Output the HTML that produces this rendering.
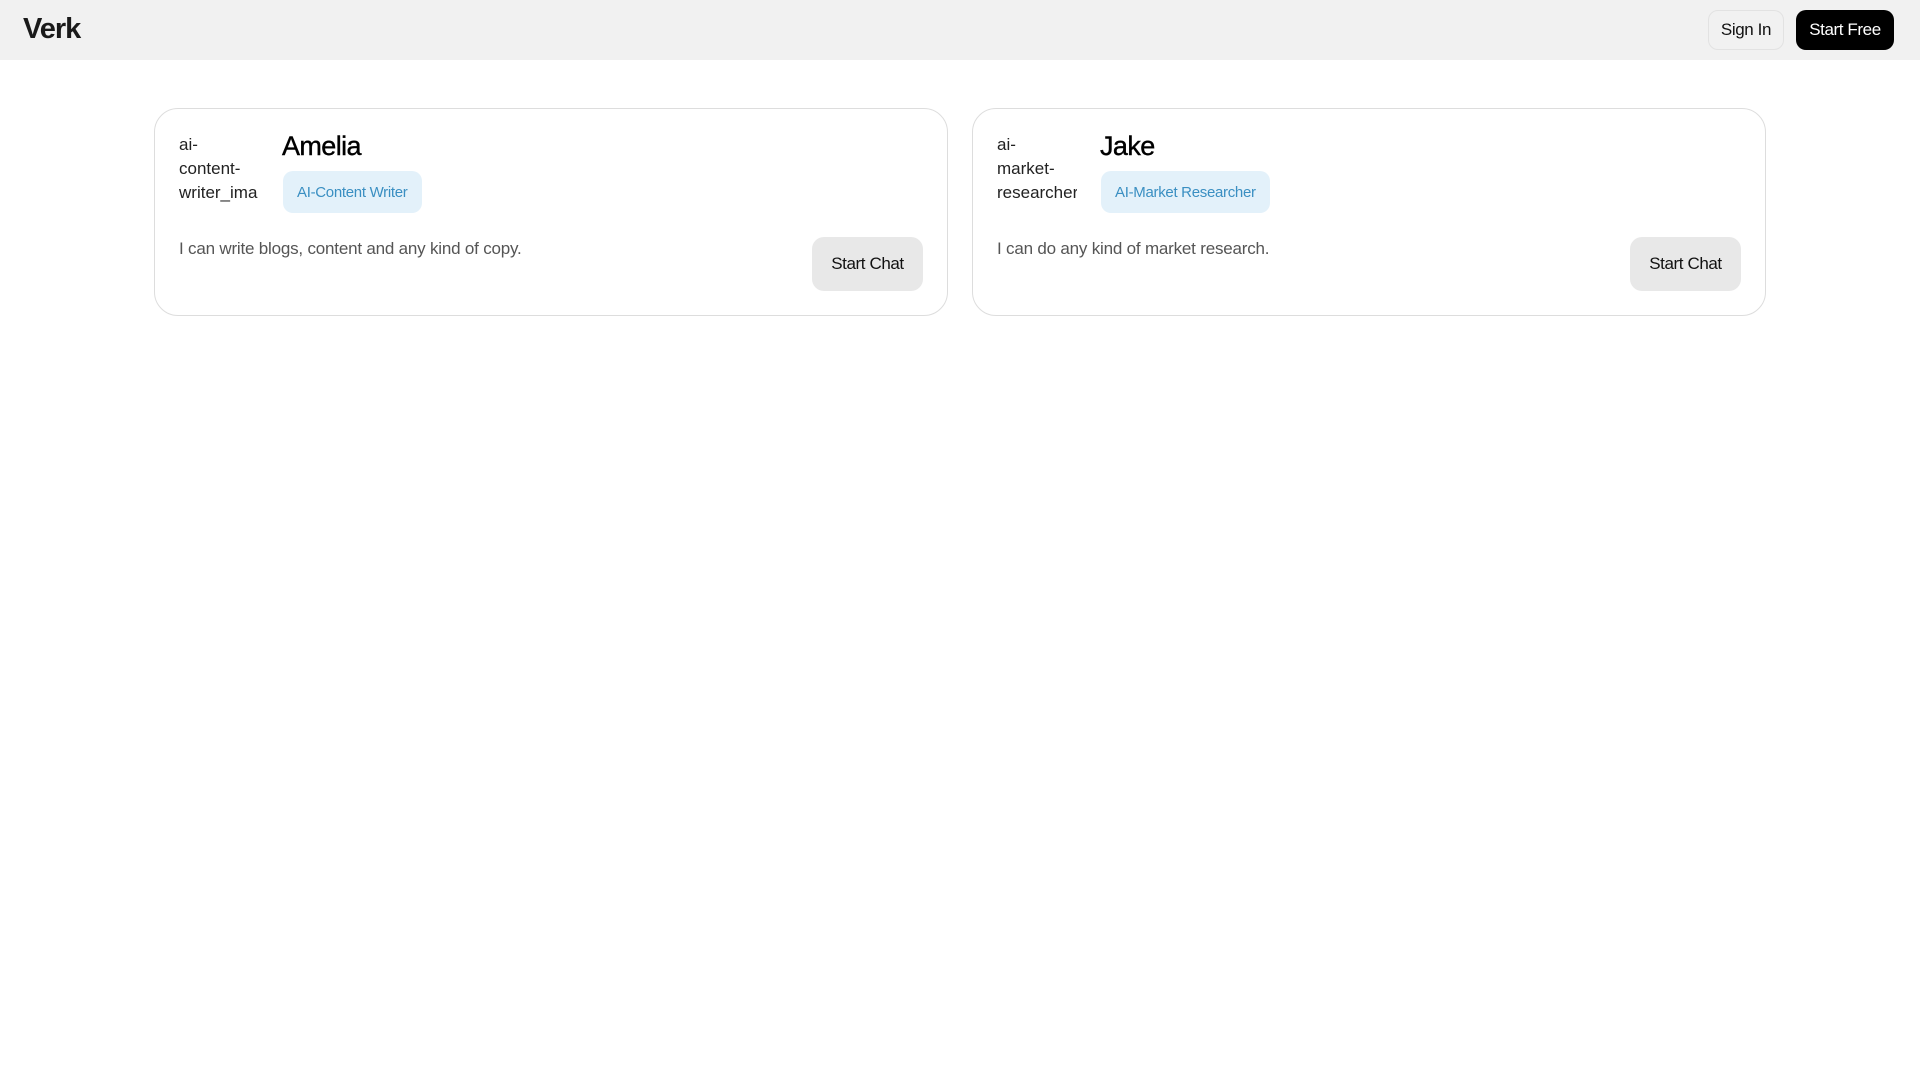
<!DOCTYPE html>
<html><head><meta charset="utf-8"><style>
*{box-sizing:border-box;margin:0;padding:0}
body{width:1920px;height:1080px;background:#fff;font-family:"Liberation Sans",sans-serif;color:#111;position:relative;overflow:hidden}
.hdr{position:absolute;left:0;top:0;width:1920px;height:60px;background:#f1f1f1}
.logo{position:absolute;left:23px;top:13px;font-size:29px;font-weight:bold;letter-spacing:-1px;color:#1a1a1a}
.btn{position:absolute;display:flex;align-items:center;justify-content:center;font-size:17px;border-radius:10px;letter-spacing:-0.4px}
.si{left:1708px;top:10px;width:76px;height:40px;border:1px solid #e2e2e2;color:#111}
.sf{left:1796px;top:10px;width:98px;height:40px;background:#000;color:#fff}
.card{position:absolute;top:108px;width:794px;height:208px;border:1px solid #ddd;border-radius:24px}
.img{position:absolute;left:24px;top:24px;width:80px;font-size:17px;line-height:24px;color:#222;overflow:hidden;height:72px;white-space:nowrap}
.name{position:absolute;left:127px;top:22px;font-size:27px;font-weight:normal;letter-spacing:-0.6px;color:#000;-webkit-text-stroke:0.4px #000}
.badge{position:absolute;left:128px;top:62px;height:42px;padding:0 14px;background:#e3f1fa;color:#3a8fc2;font-size:15px;border-radius:10px;display:flex;align-items:center;letter-spacing:-0.3px}
.desc{position:absolute;left:24px;top:130px;font-size:17px;color:#555;letter-spacing:-0.2px}
.sc{position:absolute;right:24px;top:128px;width:111px;height:54px;background:#e8e8e8;border-radius:12px;display:flex;align-items:center;justify-content:center;font-size:17px;font-weight:500;letter-spacing:-0.4px}
</style></head><body>
<div class="hdr"><div class="logo">Verk</div>
<div class="btn si">Sign In</div><div class="btn sf">Start Free</div></div>
<div class="card" style="left:154px">
<div class="img">ai-<br>content-<br>writer_ima</div>
<div class="name">Amelia</div>
<div class="badge">AI-Content Writer</div>
<div class="desc">I can write blogs, content and any kind of copy.</div>
<div class="sc">Start Chat</div></div>
<div class="card" style="left:972px">
<div class="img">ai-<br>market-<br>researcher</div>
<div class="name">Jake</div>
<div class="badge">AI-Market Researcher</div>
<div class="desc">I can do any kind of market research.</div>
<div class="sc">Start Chat</div></div>
</body></html>
